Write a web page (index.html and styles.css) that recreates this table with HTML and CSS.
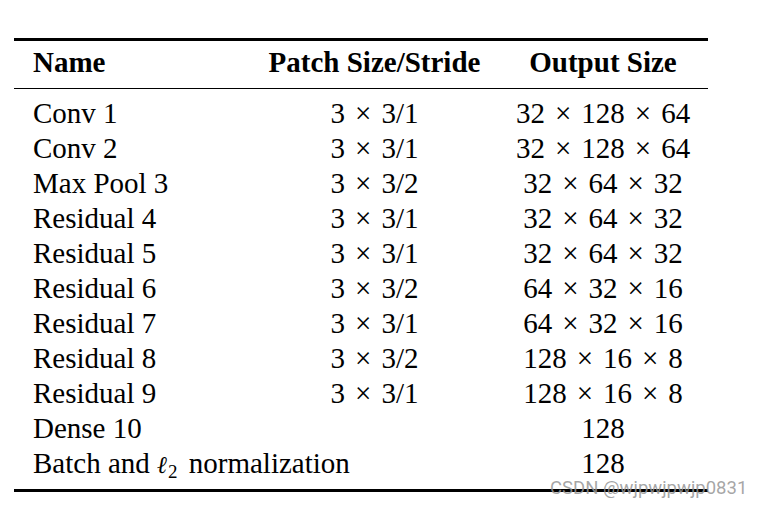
FILE: index.html
```html
<!DOCTYPE html>
<html>
<head>
<meta charset="utf-8">
<link rel="stylesheet" href="styles.css">
</head>
<body>
<div class="page">
  <div class="table">
    <div class="head">
      <div class="c1">Name</div>
      <div class="c2">Patch Size/Stride</div>
      <div class="c3">Output Size</div>
    </div>
    <div class="body">
      <div class="row"><div class="c1">Conv 1</div><div class="c2 m">3<span class="x">×</span>3/1</div><div class="c3 m">32<span class="x">×</span>128<span class="x">×</span>64</div></div>
      <div class="row"><div class="c1">Conv 2</div><div class="c2 m">3<span class="x">×</span>3/1</div><div class="c3 m">32<span class="x">×</span>128<span class="x">×</span>64</div></div>
      <div class="row"><div class="c1">Max Pool 3</div><div class="c2 m">3<span class="x">×</span>3/2</div><div class="c3 m">32<span class="x">×</span>64<span class="x">×</span>32</div></div>
      <div class="row"><div class="c1">Residual 4</div><div class="c2 m">3<span class="x">×</span>3/1</div><div class="c3 m">32<span class="x">×</span>64<span class="x">×</span>32</div></div>
      <div class="row"><div class="c1">Residual 5</div><div class="c2 m">3<span class="x">×</span>3/1</div><div class="c3 m">32<span class="x">×</span>64<span class="x">×</span>32</div></div>
      <div class="row"><div class="c1">Residual 6</div><div class="c2 m">3<span class="x">×</span>3/2</div><div class="c3 m">64<span class="x">×</span>32<span class="x">×</span>16</div></div>
      <div class="row"><div class="c1">Residual 7</div><div class="c2 m">3<span class="x">×</span>3/1</div><div class="c3 m">64<span class="x">×</span>32<span class="x">×</span>16</div></div>
      <div class="row"><div class="c1">Residual 8</div><div class="c2 m">3<span class="x">×</span>3/2</div><div class="c3 m">128<span class="x">×</span>16<span class="x">×</span>8</div></div>
      <div class="row"><div class="c1">Residual 9</div><div class="c2 m">3<span class="x">×</span>3/1</div><div class="c3 m">128<span class="x">×</span>16<span class="x">×</span>8</div></div>
      <div class="row"><div class="c1">Dense 10</div><div class="c2"></div><div class="c3 m">128</div></div>
      <div class="row"><div class="c12">Batch and <span class="ell">ℓ</span><sub class="sub">2</sub> normalization</div><div class="c3 m">128</div></div>
    </div>
  </div>
  <div class="watermark">CSDN @wjpwjpwjp0831</div>
</div>
</body>
</html>
```
FILE: styles.css
```css
html, body {
  margin: 0;
  padding: 0;
  background: #ffffff;
}

.page {
  position: relative;
  width: 760px;
  height: 507px;
  padding-top: 38px;
  box-sizing: border-box;
}

.table {
  margin-left: 14px;
  width: 694px;
  border-top: 3px solid #000;
  border-bottom: 3px solid #000;
  font-family: "Liberation Serif", "Times New Roman", serif;
  font-size: 29px;
  color: #000;
}

.head,
.row {
  display: grid;
  grid-template-columns: 200px 213px 174px;
  column-gap: 35px;
  padding-left: 19px;
  padding-right: 18px;
  height: 35px;
  line-height: 35px;
  white-space: nowrap;
}

.head {
  font-weight: bold;
  margin-top: 4px;
  padding-bottom: 8px;
  border-bottom: 1px solid #000;
}

.body {
  padding-top: 7px;
  padding-bottom: 8px;
}

.c1, .c12 {
  text-align: left;
}

.c12 {
  grid-column: 1 / span 2;
}

.c2, .c3 {
  text-align: center;
}

.m {
  font-size: 29px;
}

.x {
  margin: 0 10px;
}

.ell {
  font-family: "DejaVu Serif", serif;
  font-style: italic;
  font-size: 24px;
}

.sub {
  font-size: 19px;
  line-height: 0;
  vertical-align: -5px;
  margin-left: 1px;
  margin-right: 4px;
}

.watermark {
  position: absolute;
  left: 550px;
  top: 481px;
  font-family: Roboto, "Noto Sans", sans-serif;
  font-size: 18.5px;
  line-height: 14px;
  color: rgba(150, 150, 150, 0.85);
  white-space: nowrap;
}
```
